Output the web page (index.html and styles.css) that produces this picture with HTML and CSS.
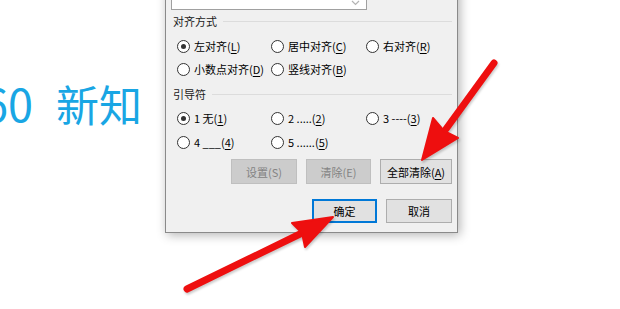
FILE: index.html
```html
<!DOCTYPE html>
<html lang="zh-CN">

<head>
    <meta charset="UTF-8">
    <meta name="viewport" content="width=device-width, initial-scale=1.0">
    <title>制表位</title>
    <link rel="stylesheet" href="styles.css">
</head>

<body>
    <div class="page">
        <div class="brand"><span class="num">60</span><span>新知</span></div>

        <div class="dialog">
            <div class="input-box">
                <svg class="spin" width="9" height="6" viewBox="0 0 9 6">
                    <path d="M1 1 L4.5 4.5 L8 1" fill="none" stroke="#b4b4b4" stroke-width="1.2" />
                </svg>
            </div>

            <div class="group-title">对齐方式</div>
            <div class="radio-grid">
                <label class="radio checked"><span class="dot"></span><span>左对齐(<u>L</u>)</span></label>
                <label class="radio"><span class="dot"></span><span>居中对齐(<u>C</u>)</span></label>
                <label class="radio"><span class="dot"></span><span>右对齐(<u>R</u>)</span></label>
                <label class="radio"><span class="dot"></span><span>小数点对齐(<u>D</u>)</span></label>
                <label class="radio"><span class="dot"></span><span>竖线对齐(<u>B</u>)</span></label>
            </div>

            <div class="group-title">引导符</div>
            <div class="radio-grid leader">
                <label class="radio checked"><span class="dot"></span><span>1 无(<u>1</u>)</span></label>
                <label class="radio"><span class="dot"></span><span>2 .....(<u>2</u>)</span></label>
                <label class="radio"><span class="dot"></span><span>3 ----(<u>3</u>)</span></label>
                <label class="radio"><span class="dot"></span><span>4 ___(<u>4</u>)</span></label>
                <label class="radio"><span class="dot"></span><span>5 ......(<u>5</u>)</span></label>
            </div>

            <div class="btn-row">
                <button class="btn disabled" style="width: 66px;">设置(S)</button>
                <button class="btn disabled" style="width: 65px;">清除(E)</button>
                <button class="btn" style="width: 72px;">全部清除(<u>A</u>)</button>
            </div>

            <div class="btn-row footer">
                <button class="btn primary" style="width: 65px;">确定</button>
                <button class="btn" style="width: 66px;">取消</button>
            </div>
        </div>
    </div>

    <!-- annotation arrows -->
    <svg class="arrows" width="620" height="309" viewBox="0 0 620 309">
        <g fill="#ee0f0f" stroke="#ee0f0f" stroke-linejoin="round">
            <line x1="494" y1="63" x2="446" y2="129" stroke-width="7" stroke-linecap="round" />
            <polygon points="422,160 433,118 444,131 458,138" stroke-width="2" />
            <line x1="187" y1="289" x2="300" y2="234" stroke-width="7" stroke-linecap="round" />
            <polygon points="333,217 292,223 302,233 305,247" stroke-width="2" />
        </g>
    </svg>
</body>

</html>
```

FILE: styles.css
```css
body {
    margin: 0;
    padding: 0;
    width: 620px;
    height: 309px;
    overflow: hidden;
    position: relative;
    background: #ffffff;
    font-family: "Noto Sans CJK SC", "Noto Sans", sans-serif;
}

.page {
    display: flex;
    align-items: flex-start;
}

.brand {
    display: flex;
    gap: 23px;
    width: 182px;
    margin-left: -17px;
    padding-top: 78px;
    flex-shrink: 0;
    font-size: 43px;
    line-height: 50px;
    color: #19a6e4;
    white-space: nowrap;
}

.brand .num {
    font-size: 45px;
}

.dialog {
    width: 286px;
    margin-top: -20px;
    padding: 0 5px 9px 0;
    background: #f0f0f0;
    border: 1px solid #8a8a8a;
    box-shadow: 2px 2px 10px rgba(0, 0, 0, 0.3);
    font-size: 11px;
    color: #000000;
}

.input-box {
    width: 194px;
    height: 27px;
    margin-left: 5px;
    background: #ffffff;
    border: 1px solid #a0a0a0;
    position: relative;
}

.spin {
    position: absolute;
    right: 6px;
    bottom: 3px;
}

.group-title {
    display: flex;
    align-items: center;
    gap: 6px;
    height: 16px;
    line-height: 16px;
    margin-top: 9px;
    padding-left: 7px;
    color: #1a1a1a;
}

.input-box + .group-title {
    margin-top: 3px;
}

.group-title::after {
    content: "";
    flex: 1;
    height: 1px;
    background: #dcdcdc;
}

.radio-grid {
    display: grid;
    grid-template-columns: 94px 95px auto;
    row-gap: 7px;
    margin-top: 9px;
    padding-left: 11px;
}

.radio-grid.leader {
    row-gap: 8px;
    margin-top: 8px;
}

.radio {
    display: flex;
    align-items: center;
    gap: 4px;
    height: 16px;
    line-height: 16px;
    white-space: nowrap;
    color: #000000;
}

.dot {
    width: 11px;
    height: 11px;
    border: 1px solid #333333;
    border-radius: 50%;
    background: #ffffff;
    display: flex;
    align-items: center;
    justify-content: center;
    flex-shrink: 0;
}

.radio.checked .dot::after {
    content: "";
    width: 5px;
    height: 5px;
    border-radius: 50%;
    background: #333333;
}

u {
    text-decoration: underline;
    text-underline-offset: 2px;
}

.btn-row {
    display: flex;
    justify-content: flex-end;
    gap: 9px;
    margin-top: 9px;
}

.btn-row.footer {
    margin-top: 15px;
}

.btn {
    height: 25px;
    padding: 0;
    font-family: inherit;
    font-size: 11px;
    color: #000000;
    background: #e1e1e1;
    border: 1px solid #adadad;
}

.btn.disabled {
    color: #838383;
    background: #cccccc;
    border-color: #bfbfbf;
}

.btn.primary {
    border-color: #0078d7;
    box-shadow: inset 0 0 0 1px #0078d7;
}

.footer .btn {
    height: 24px;
}

.arrows {
    position: absolute;
    left: 0;
    top: 0;
    filter: drop-shadow(1px 2px 1px rgba(0, 0, 0, 0.2));
}
```
